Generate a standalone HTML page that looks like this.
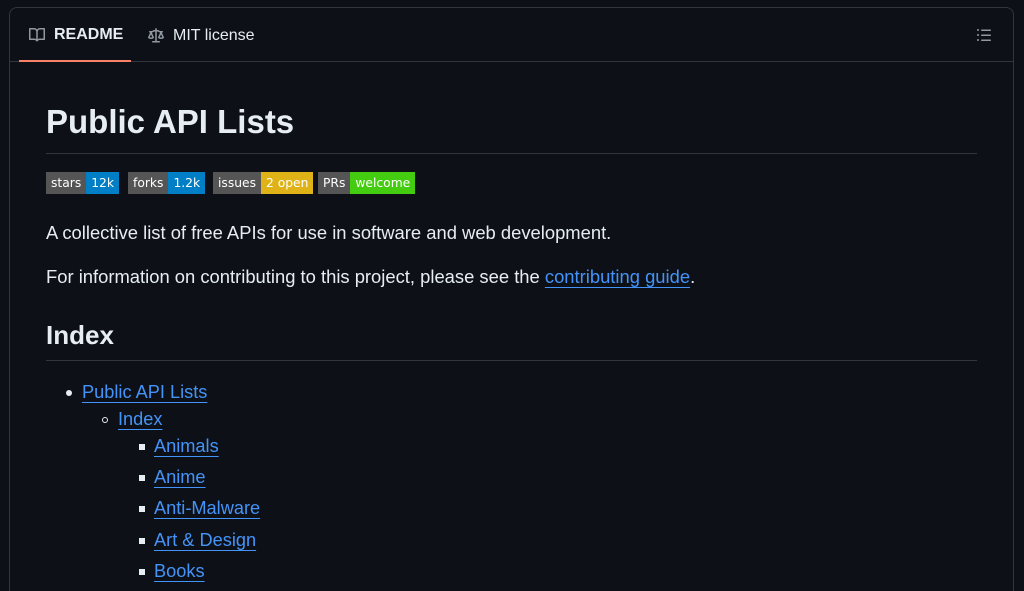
<!DOCTYPE html>
<html><head><meta charset="utf-8"><style>
*{box-sizing:border-box;margin:0;padding:0}
html,body{width:1024px;height:591px;overflow:hidden;background:#0d1117}
body{font-family:"Liberation Sans",sans-serif;color:#e6edf3}
#w{position:relative;width:1024px;height:591px;overflow:hidden}
.box{position:absolute;left:9px;top:7px;width:1005px;height:584px;border:1px solid #30363d;border-bottom:none;border-radius:8px 8px 0 0}
.hdr{height:54px;border-bottom:1px solid #30363d;position:relative}
.tab{position:absolute;top:0;height:54px;display:flex;align-items:center;font-size:16px;padding-top:2px}
.t1{left:9px;width:112px;padding-left:9px;font-weight:bold;border-bottom:2px solid #f78166;height:54px}
.t2{left:137px}
.tab svg{margin-right:8px}
h1{position:absolute;left:46px;top:103px;font-size:33px;font-weight:bold}
.hr{position:absolute;left:46px;width:931px;height:1px;background:#30363d}
.badge{position:absolute;top:172px;height:22px;display:flex;font-family:"DejaVu Sans",sans-serif;font-size:12.3px;color:#fff;line-height:22px}
.badge span{padding:0 5px}
.g{background:#555}
p{position:absolute;left:46px;font-size:18.4px;white-space:nowrap}
a{color:#4493f8;text-decoration:underline;text-underline-offset:4px}
h2{position:absolute;left:46px;top:320px;font-size:26px;font-weight:bold}
.li{position:absolute;font-size:18.2px;white-space:nowrap}
.d{position:absolute;width:6px;height:6px}
</style></head><body><div id="w">
<div class="box">
<div class="hdr">
<div class="tab t1"><svg width="18" height="16" viewBox="0 0 16 16" fill="#9198a1"><path d="M0 1.75A.75.75 0 0 1 .75 1h4.253c1.227 0 2.317.59 3 1.501A3.743 3.743 0 0 1 11.006 1h4.245a.75.75 0 0 1 .75.75v10.5a.75.75 0 0 1-.75.75h-4.507a2.25 2.25 0 0 0-1.591.659l-.622.621a.75.75 0 0 1-1.060 0l-.622-.621A2.250 2.250 0 0 0 5.258 13H.75a.75.75 0 0 1-.75-.75Zm7.251 10.324.004-5.073-.002-2.253A2.25 2.25 0 0 0 5.003 2.5H1.5v9h3.757a3.75 3.750 0 0 1 1.994.574ZM8.755 4.75l-.004 7.322a3.752 3.752 0 0 1 1.992-.572H14.5v-9h-3.495a2.25 2.25 0 0 0-2.25 2.25Z"/></svg>README</div>
<div class="tab t2"><svg width="18" height="16" viewBox="0 0 16 16" fill="#9198a1"><path d="M8.75.75V2h.985c.304 0 .603.08.867.231l1.29.736c.038.022.08.033.124.033h2.234a.75.75 0 0 1 0 1.5h-.427l2.111 4.692a.75.75 0 0 1-.154.838l-.53-.53.529.531-.001.002-.002.002-.006.006-.006.005-.01.01-.045.04c-.21.176-.441.327-.686.45C14.556 10.78 13.880 11 13 11a4.498 4.498 0 0 1-2.023-.454 3.544 3.544 0 0 1-.686-.45l-.045-.04-.016-.015-.006-.006-.004-.004v-.001a.75.75 0 0 1-.154-.838L12.178 4.5h-.162c-.305 0-.604-.079-.868-.231l-1.29-.736a.245.245 0 0 0-.124-.033H8.75V13h2.5a.75.75 0 0 1 0 1.5h-6.5a.75.75 0 0 1 0-1.5h2.5V3.5h-.984a.245.245 0 0 0-.124.033l-1.289.737c-.265.150-.564.23-.869.23h-.162l2.112 4.692a.75.75 0 0 1-.154.838l-.53-.53.529.531-.001.002-.002.002-.006.006-.016.015-.045.04c-.21.176-.441.327-.686.45C4.556 10.78 3.880 11 3 11a4.498 4.498 0 0 1-2.023-.454 3.544 3.544 0 0 1-.686-.45l-.045-.04-.016-.015-.006-.006-.004-.004v-.001a.75.75 0 0 1-.154-.838L2.178 4.5H1.75a.75.75 0 0 1 0-1.5h2.234a.249.249 0 0 0 .125-.033l1.288-.737c.265-.15.564-.23.869-.23h.984V.75a.75.75 0 0 1 1.5 0Zm2.945 8.477c.285.135.718.273 1.305.273s1.02-.138 1.305-.273L13 6.327Zm-10 0c.285.135.718.273 1.305.273s1.020-.138 1.305-.273L3 6.327Z"/></svg>MIT license</div>
<svg style="position:absolute;left:966px;top:19px" width="16" height="16" viewBox="0 0 16 16" fill="#9198a1"><path d="M5.75 2.5h8.5a.75.75 0 0 1 0 1.5h-8.5a.75.75 0 0 1 0-1.5Zm0 5h8.5a.75.75 0 0 1 0 1.5h-8.5a.75.75 0 0 1 0-1.5Zm0 5h8.5a.75.75 0 0 1 0 1.5h-8.5a.75.75 0 0 1 0-1.5ZM2 14a1 1 0 1 1 0-2 1 1 0 0 1 0 2Zm1-6a1 1 0 1 1-2 0 1 1 0 0 1 2 0ZM2 4a1 1 0 1 1 0-2 1 1 0 0 1 0 2Z"/></svg>
</div>
</div>
<h1>Public API Lists</h1>
<div class="hr" style="top:153px"></div>
<div class="badge" style="left:46px"><span class="g">stars</span><span style="background:#007ec6">12k</span></div>
<div class="badge" style="left:128px"><span class="g">forks</span><span style="background:#007ec6">1.2k</span></div>
<div class="badge" style="left:213px"><span class="g">issues</span><span style="background:#dfb317">2 open</span></div>
<div class="badge" style="left:318px"><span class="g">PRs</span><span style="background:#4c1">welcome</span></div>
<p style="top:222px">A collective list of free APIs for use in software and web development.</p>
<p style="top:266px">For information on contributing to this project, please see the <a>contributing guide</a>.</p>
<h2>Index</h2>
<div class="hr" style="top:360px"></div>
<div class="d" style="left:66px;top:390px;border-radius:50%;background:#e6edf3"></div>
<div class="li" style="left:82px;top:382px"><a>Public API Lists</a></div>
<div class="d" style="left:102px;top:417px;border-radius:50%;border:1px solid #e6edf3"></div>
<div class="li" style="left:118px;top:409px"><a>Index</a></div>
<div class="d" style="left:139px;top:444px;background:#e6edf3"></div>
<div class="li" style="left:154px;top:436px"><a>Animals</a></div>
<div class="d" style="left:139px;top:475px;background:#e6edf3"></div>
<div class="li" style="left:154px;top:467px"><a>Anime</a></div>
<div class="d" style="left:139px;top:506px;background:#e6edf3"></div>
<div class="li" style="left:154px;top:498px"><a>Anti-Malware</a></div>
<div class="d" style="left:139px;top:538px;background:#e6edf3"></div>
<div class="li" style="left:154px;top:530px"><a>Art &amp; Design</a></div>
<div class="d" style="left:139px;top:569px;background:#e6edf3"></div>
<div class="li" style="left:154px;top:561px"><a>Books</a></div>
</div></body></html>
